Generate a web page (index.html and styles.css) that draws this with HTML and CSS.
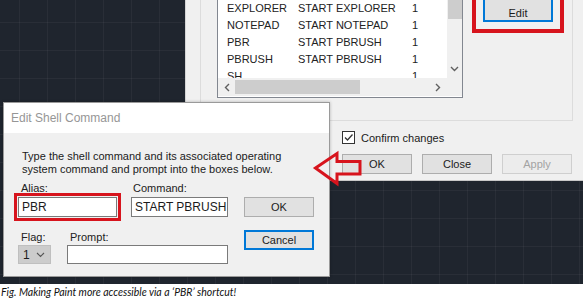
FILE: index.html
```html
<!DOCTYPE html>
<html lang="en">
<head>
  <meta charset="UTF-8">
  <title>Edit Shell Command</title>
  <link rel="stylesheet" href="styles.css">
</head>
<body>

  <div class="scene">

    <!-- program parameters dialog, behind -->
    <div class="window back">
      <div class="group">
        <div class="listbox">
          <div class="rows">
            <div class="row"><span>EXPLORER</span><span>START EXPLORER</span><span>1</span></div>
            <div class="row"><span>NOTEPAD</span><span>START NOTEPAD</span><span>1</span></div>
            <div class="row"><span>PBR</span><span>START PBRUSH</span><span>1</span></div>
            <div class="row"><span>PBRUSH</span><span>START PBRUSH</span><span>1</span></div>
            <div class="row"><span>SH</span><span></span><span>1</span></div>
          </div>
          <div class="vscroll">
            <div class="vthumb"></div>
            <svg class="chev" width="9" height="6" viewBox="0 0 9 6"><path d="M1 1l3.5 3.5L8 1" fill="none" stroke="#606060" stroke-width="1.4"/></svg>
          </div>
          <div class="hscroll">
            <svg class="chev" width="6" height="9" viewBox="0 0 6 9"><path d="M5 1L1.5 4.5 5 8" fill="none" stroke="#606060" stroke-width="1.4"/></svg>
            <div class="hthumb"></div>
            <svg class="chev" width="6" height="9" viewBox="0 0 6 9"><path d="M1 1l3.5 3.5L1 8" fill="none" stroke="#606060" stroke-width="1.4"/></svg>
          </div>
          <div class="corner"></div>
        </div>
        <div class="side">
          <button class="btn edit marked">Edit</button>
        </div>
      </div>

      <div class="footer">
        <label class="check">
          <span class="box">
            <svg width="11" height="11" viewBox="0 0 11 11"><path d="M2 5.5l2.5 2.5L9.5 2.5" fill="none" stroke="#333" stroke-width="1.3"/></svg>
          </span>
          Confirm changes
        </label>
        <div class="actions">
          <button class="btn">OK</button>
          <button class="btn">Close</button>
          <button class="btn" disabled>Apply</button>
        </div>
      </div>
    </div>

    <!-- edit shell command dialog, in front -->
    <div class="window front">
      <div class="titlebar">Edit Shell Command</div>
      <div class="body">
        <p class="intro">Type the shell command and its associated operating system command and prompt into the boxes below.</p>

        <div class="line first">
          <div class="field alias">
            <span class="label">Alias:</span>
            <div class="input marked">PBR</div>
          </div>
          <div class="field command">
            <span class="label">Command:</span>
            <div class="input">START PBRUSH</div>
          </div>
          <button class="btn">OK</button>
        </div>

        <div class="line second">
          <div class="field flag">
            <span class="label">Flag:</span>
            <div class="select">1
              <svg width="9" height="6" viewBox="0 0 9 6"><path d="M1 1l3.5 3.5L8 1" fill="none" stroke="#555" stroke-width="1.1"/></svg>
            </div>
          </div>
          <div class="field prompt">
            <span class="label">Prompt:</span>
            <div class="input"></div>
          </div>
          <button class="btn focus">Cancel</button>
        </div>
      </div>
    </div>

    <svg class="pointer" width="52" height="38" viewBox="0 0 52 38">
      <path d="M3.5 18L25 3.5v8h23v12.5H25v9.5z" fill="none" stroke="#d7141d" stroke-width="3" stroke-linejoin="miter"/>
    </svg>
  </div>

  <p class="caption">Fig. Making Paint more accessible via a ‘PBR’ shortcut!</p>

</body>
</html>
```

FILE: styles.css
```css
/* Basic styling */
body {
  margin: 0;
  width: 583px;
  height: 301px;
  overflow: hidden;
  background: #fff;
  font-family: "Liberation Sans", Arial, sans-serif;
  font-size: 11px;
  color: #1b1b1b;
}

/* Dark drawing area with grid */
.scene {
  position: relative;
  height: 284px;
  overflow: hidden;
  background-color: #1f252e;
  background-image:
    linear-gradient(to right, rgba(255, 255, 255, 0.045) 1px, transparent 1px),
    linear-gradient(to bottom, rgba(255, 255, 255, 0.045) 1px, transparent 1px);
  background-size: 28px 28px;
  background-position: 19px 22px;
}

.window {
  position: absolute;
  background: #f0f0f0;
  box-sizing: border-box;
}

/* Buttons */
.btn {
  box-sizing: border-box;
  width: 70px;
  height: 20px;
  padding: 0;
  font-family: inherit;
  font-size: 11px;
  color: #1b1b1b;
  background: #e1e1e1;
  border: 1px solid #adadad;
}

.btn:disabled {
  color: #a3a3a3;
  background: #ececec;
  border-color: #cfcfcf;
}

.btn.focus {
  border: 2px solid #0078d7;
}

.marked {
  outline: 3px solid #d7141d;
}

/* Back dialog */
.back {
  left: 185px;
  top: 0;
  width: 400px;
  height: 181px;
  border-left: 1px solid #d4d4d4;
  border-bottom: 1px solid #c8c8c8;
}

.group {
  display: flex;
  gap: 20px;
  margin-left: 14px;
  width: 373px;
  height: 121px;
  box-sizing: border-box;
  padding-left: 16px;
  border-left: 1px solid #dcdcdc;
  border-right: 1px solid #dcdcdc;
  border-bottom: 1px solid #dcdcdc;
}

.listbox {
  display: grid;
  grid-template-columns: 229px 15px;
  grid-template-rows: 78px 18px;
  height: 97px;
  background: #fff;
  border: 1px solid #828790;
  border-top: none;
}

.rows {
  overflow: hidden;
}

.row {
  display: grid;
  grid-template-columns: 71px 114px 1fr;
  height: 17px;
  line-height: 17px;
  padding-left: 9px;
  color: #222;
}

.vscroll {
  display: flex;
  flex-direction: column;
  align-items: center;
  justify-content: space-between;
  padding-bottom: 6px;
  background: #f0f0f0;
}

.vthumb {
  width: 14px;
  height: 19px;
  background: #cdcdcd;
}

.hscroll {
  display: flex;
  align-items: center;
  gap: 5px;
  padding: 0 6px 0 6px;
  background: #f0f0f0;
}

.hthumb {
  width: 125px;
  height: 14px;
  margin-right: auto;
  background: #cdcdcd;
}

.corner {
  background: #f0f0f0;
}

.side .edit {
  height: 24px;
  margin-top: -2px;
  padding-top: 5px;
  border: 2px solid #0078d7;
  outline-width: 4px;
  outline-offset: 7px;
}

.footer {
  display: flex;
  flex-direction: column;
  gap: 10px;
  margin: 10px 0 0 156px;
  width: 232px;
}

.check {
  display: flex;
  align-items: center;
  gap: 6px;
  height: 13px;
}

.check .box {
  display: flex;
  align-items: center;
  justify-content: center;
  width: 11px;
  height: 11px;
  border: 1px solid #333;
  background: #fff;
}

.actions {
  display: flex;
  gap: 10px;
}

/* Front dialog */
.front {
  left: 3px;
  top: 102px;
  width: 327px;
  height: 175px;
  border: 1px solid #9a9a9a;
  box-shadow: 0 0 3px rgba(0, 0, 0, 0.25);
}

.titlebar {
  height: 30px;
  line-height: 30px;
  padding-left: 7px;
  font-size: 12px;
  color: #969696;
  background: #fff;
}

.body {
  padding: 17px 15px 0 14px;
}

.intro {
  margin: 0 0 6px 4px;
  line-height: 13px;
}

.line {
  display: flex;
  gap: 14px;
}

.line.second {
  gap: 16px;
  margin-top: 13px;
}

.line.first .btn {
  align-self: flex-end;
  margin-left: 2px;
}

.field {
  display: flex;
  flex-direction: column;
  gap: 3px;
}

.label {
  line-height: 12px;
  padding-left: 3px;
  color: #222;
}

.input {
  box-sizing: border-box;
  height: 20px;
  line-height: 18px;
  padding-left: 3px;
  font-size: 12px;
  background: #fff;
  border: 1px solid #7a7a7a;
}

.input.marked {
  outline-offset: 1px;
}

.alias { width: 99px; }
.command { width: 97px; }
.command .label { padding-left: 2px; }

.second .field { gap: 2px; }
.second .label { margin-top: 1px; }
.second .input { height: 19px; }

.flag { width: 33px; }
.prompt { width: 161px; }

.select {
  display: flex;
  align-items: center;
  justify-content: space-between;
  box-sizing: border-box;
  height: 19px;
  padding: 0 5px 0 4px;
  font-size: 12px;
  background: #cccccc;
  border: 1px solid #bfbfbf;
}

/* Red pointer arrow */
.pointer {
  position: absolute;
  left: 312px;
  top: 150px;
}

/* Caption under the picture */
.caption {
  margin: 0;
  height: 17px;
  line-height: 16px;
  padding-left: 1px;
  font-family: Lato, "Liberation Sans", sans-serif;
  font-style: italic;
  font-size: 10.5px;
  color: #111;
}
```
